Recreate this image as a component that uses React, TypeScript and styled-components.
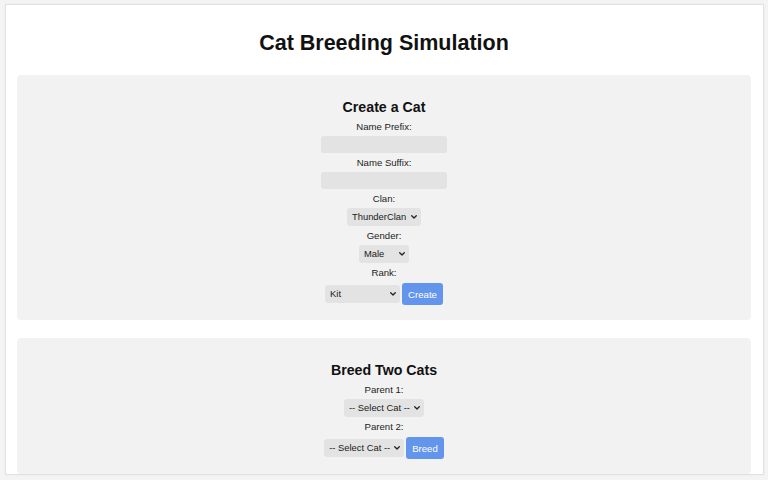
import React, { useState } from 'react';
import styled, { createGlobalStyle } from 'styled-components';

const GlobalStyle = createGlobalStyle`
    html, body {
        margin: 0;
        padding: 0;
        height: 100%;
        overflow: hidden;
        background: #f4f4f4;
        font-family: "Liberation Sans", Arial, sans-serif;
    }
`;

const Page = styled.div`
    box-sizing: border-box;
    margin: 4px 4px 0 5px;
    height: 471px;
    background: #ffffff;
    border: 1px solid #e2e2e2;
    box-shadow: 0 0 2px rgba(0, 0, 0, 0.06);
    padding: 25px 12px 0 11px;
    overflow: hidden;
    display: flex;
    flex-direction: column;
    gap: 18px;
`;

const Title = styled.h1`
    margin: 0;
    font-size: 21.5px;
    line-height: 27px;
    font-weight: 700;
    text-align: center;
    color: #111;
`;

const Section = styled.section`
    background: #f2f2f2;
    border-radius: 4px;
    padding: 24px 16px 15px;
    display: flex;
    flex-direction: column;
    align-items: center;
    flex-shrink: 0;
`;

const SectionTitle = styled.h2`
    margin: 0 0 5px;
    font-size: 14.2px;
    line-height: 16px;
    font-weight: 700;
    color: #111;
`;

const Label = styled.label`
    display: block;
    font-size: 9.6px;
    line-height: 14px;
    color: #222;
    margin-bottom: 2px;
`;

const TextInput = styled.input`
    box-sizing: border-box;
    display: block;
    width: 126px;
    height: 17px;
    margin: 0 0 3px;
    border: none;
    border-radius: 3px;
    background: #e3e3e3;
    font-family: inherit;
    font-size: 9.6px;
    padding: 0 4px;
    outline: none;
`;

const SelectWrap = styled.div<{ $width: number; $flat?: boolean }>`
    position: relative;
    width: ${ props => props.$width }px;
    height: 18px;
    margin: ${ props => props.$flat ? '0' : '0 0 3px' };
`;

const Select = styled.select`
    appearance: none;
    -webkit-appearance: none;
    display: block;
    box-sizing: border-box;
    width: 100%;
    height: 100%;
    margin: 0;
    border: none;
    border-radius: 3px;
    background-color: #e3e3e3;
    color: #1a1a1a;
    font-family: inherit;
    font-size: 9.4px;
    line-height: 18px;
    padding: 0 9px 0 5px;
    outline: none;
    white-space: nowrap;
    overflow: hidden;
`;

const Chevron = styled.svg`
    position: absolute;
    right: 4px;
    top: 7px;
    width: 6px;
    height: 4px;
    pointer-events: none;
`;

const ActionRow = styled.div`
    display: flex;
    align-items: center;
    gap: 2px;
    margin-top: 1px;
`;

const Button = styled.button`
    height: 22px;
    padding: 0 6px;
    border: none;
    border-radius: 3px;
    background: #6495ed;
    color: #ffffff;
    font-family: inherit;
    font-size: 9.6px;
    cursor: pointer;
`;

type DropdownProps = {
    id: string;
    width: number;
    options: string[];
    flat?: boolean;
};

const Dropdown = ({ id, width, options, flat }: DropdownProps) => (
    <SelectWrap $width={ width } $flat={ flat }>
        <Select id={ id }>
            { options.map((o) => <option key={ o }>{ o }</option>) }
        </Select>
        <Chevron viewBox="0 0 6 4">
            <path d="M0.7 0.7 L3 3 L5.3 0.7" fill="none" stroke="#222" strokeWidth="1.3" strokeLinecap="round" strokeLinejoin="round" />
        </Chevron>
    </SelectWrap>
);

const clans = [ 'ThunderClan', 'RiverClan', 'WindClan', 'ShadowClan' ];
const ranks = [ 'Kit', 'Apprentice', 'Warrior', 'Medicine Cat', 'Deputy', 'Leader', 'Elder' ];

const App = () => {
    const [ prefix, setPrefix ] = useState('');
    const [ suffix, setSuffix ] = useState('');

    return (
        <>
            <GlobalStyle />
            <Page>
                <Title>Cat Breeding Simulation</Title>

                <Section>
                    <SectionTitle>Create a Cat</SectionTitle>
                    <Label htmlFor="prefix">Name Prefix:</Label>
                    <TextInput id="prefix" value={ prefix } onChange={ (e) => setPrefix(e.target.value) } />
                    <Label htmlFor="suffix">Name Suffix:</Label>
                    <TextInput id="suffix" value={ suffix } onChange={ (e) => setSuffix(e.target.value) } />
                    <Label htmlFor="clan">Clan:</Label>
                    <Dropdown id="clan" width={ 74 } options={ clans } />
                    <Label htmlFor="gender">Gender:</Label>
                    <Dropdown id="gender" width={ 50 } options={ [ 'Male', 'Female' ] } />
                    <Label htmlFor="rank">Rank:</Label>
                    <ActionRow>
                        <Dropdown id="rank" width={ 75 } options={ ranks } flat />
                        <Button>Create</Button>
                    </ActionRow>
                </Section>

                <Section>
                    <SectionTitle>Breed Two Cats</SectionTitle>
                    <Label htmlFor="parent1">Parent 1:</Label>
                    <Dropdown id="parent1" width={ 80 } options={ [ '-- Select Cat --' ] } />
                    <Label htmlFor="parent2">Parent 2:</Label>
                    <ActionRow>
                        <Dropdown id="parent2" width={ 80 } options={ [ '-- Select Cat --' ] } flat />
                        <Button>Breed</Button>
                    </ActionRow>
                </Section>
            </Page>
        </>
    );
};

export default App;
